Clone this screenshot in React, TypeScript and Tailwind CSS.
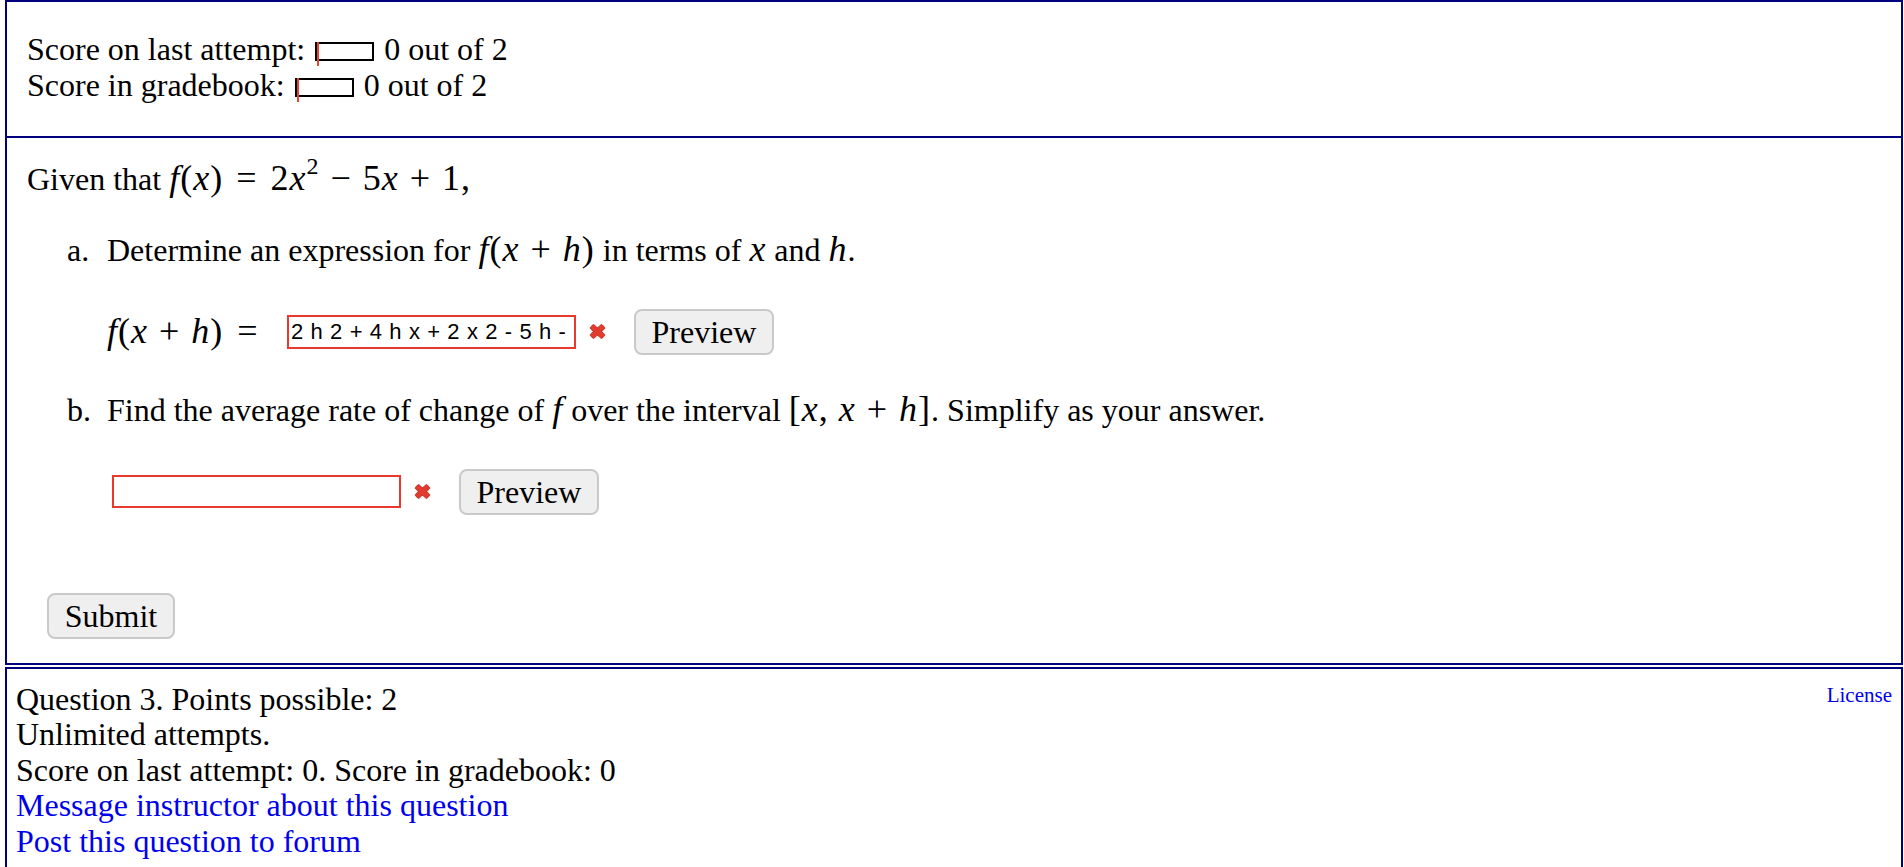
import React from "react";

const serif = { fontFamily: '"Liberation Serif", "Times New Roman", serif' };

function XMark() {
  return (
    <svg width="17" height="15" viewBox="0 0 17 15" className="shrink-0">
      <g transform="translate(8.5 7.5)">
        <rect x="-8" y="-2.7" width="16" height="5.4" rx="1.2" fill="#e33b2e" stroke="#b42a20" strokeWidth="0.8" transform="rotate(42)" />
        <rect x="-8" y="-2.7" width="16" height="5.4" rx="1.2" fill="#e33b2e" stroke="#b42a20" strokeWidth="0.8" transform="rotate(-42)" />
        <rect x="-7.2" y="-2" width="14.4" height="4" rx="1" fill="#e33b2e" transform="rotate(42)" />
      </g>
    </svg>
  );
}

function ScoreBar() {
  return (
    <span className="relative inline-block w-[59px] h-[19px] border-2 border-black align-[-1px] mx-[2px]">
      <span className="absolute left-[0px] top-[-2px] w-[2px] h-[24px] bg-[#e8412f]" />
    </span>
  );
}

function Btn({ label, w }: { label: string; w: string }) {
  return (
    <button
      className={`${w} h-[46px] rounded-[8px] border-2 border-[#c9c9c9] bg-[#efefef] text-[32px] leading-none text-black flex items-center justify-center`}
      style={serif}
    >
      {label}
    </button>
  );
}

const I = ({ children }: { children: React.ReactNode }) => <i className="italic">{children}</i>;
const Op = ({ children, w = "mx-[11px]" }: { children: React.ReactNode; w?: string }) => (
  <span className={w}>{children}</span>
);
const M = ({ children }: { children: React.ReactNode }) => (
  <span className="text-[36px] leading-[10px] tracking-[1px] whitespace-nowrap">{children}</span>
);

export default function App() {
  return (
    <div className="bg-white min-h-[867px] text-black" style={serif}>
      <div className="ml-[5px] mr-[1px] border-2 border-[#000080]">
        <div className="border-b-2 border-[#000080] pl-[20px] pt-[30px] pb-[33px] text-[32px] leading-[35.5px]">
          <div>
            Score on last attempt: <ScoreBar /> 0 out of 2
          </div>
          <div>
            Score in gradebook: <ScoreBar /> 0 out of 2
          </div>
        </div>
        <div className="pl-[20px] pt-[24px] pb-[24px] text-[32px] leading-[35.5px]">
          <div className="h-[35.5px] whitespace-nowrap">
            <span>Given that </span>
            <M>
              <I>f</I>(<I>x</I>)<Op w="mx-[13px]">=</Op>2<I>x</I>
              <span className="relative top-[-16px] text-[24px]">2</span>
              <Op>−</Op>5<I>x</I>
              <Op>+</Op>1,
            </M>
          </div>
          <div className="flex items-baseline mt-[35.5px] h-[35.5px]">
            <span className="ml-[40px] w-[40px]">a.</span>
            <span className="whitespace-nowrap">
              Determine an expression for{" "}
              <M>
                <I>f</I>(<I>x</I><Op>+</Op><I>h</I>)
              </M>{" "}
              in terms of <M><I>x</I></M> and <M><I>h</I></M>.
            </span>
          </div>
          <div className="flex items-center mt-[40px] h-[46px]">
            <span className="ml-[80px] w-[180px] text-[36px] tracking-[1px] whitespace-nowrap">
              <I>f</I>(<I>x</I><Op>+</Op><I>h</I>)<span className="ml-[14px]">=</span>
            </span>
            <div
              className="w-[289px] h-[34px] border-2 border-[#e8392c] pl-[2px] overflow-hidden whitespace-nowrap text-[22px] leading-[30px] tracking-[0.6px]"
              style={{ fontFamily: '"Liberation Sans", Arial, sans-serif' }}
            >
              2 h 2 + 4 h x + 2 x 2 - 5 h -
            </div>
            <span className="ml-[13px]">
              <XMark />
            </span>
            <span className="ml-[28px]">
              <Btn label="Preview" w="w-[140px]" />
            </span>
          </div>
          <div className="flex items-baseline mt-[38.5px] h-[35.5px]">
            <span className="ml-[40px] w-[40px]">b.</span>
            <span className="whitespace-nowrap">
              Find the average rate of change of <M><I>f</I></M> over the interval{" "}
              <M>
                [<I>x</I>,<span className="ml-[10px]" />
                <I>x</I><Op>+</Op><I>h</I>]
              </M>
              . Simplify as your answer.
            </span>
          </div>
          <div className="flex items-center mt-[40px] h-[46px]">
            <div className="ml-[85px] w-[289px] h-[33px] border-2 border-[#e8392c]" />
            <span className="ml-[13px]">
              <XMark />
            </span>
            <span className="ml-[28px]">
              <Btn label="Preview" w="w-[140px]" />
            </span>
          </div>
          <div className="mt-[78px] ml-[20px]">
            <Btn label="Submit" w="w-[128px]" />
          </div>
        </div>
      </div>
      <div className="ml-[5px] mr-[1px] mt-[2px] border-2 border-b-0 border-[#000080] pl-[9px] pr-[9px] pt-[13px] pb-[10px] text-[32px] leading-[35.5px]">
        <a href="#" className="float-right text-[21px] leading-[26px] text-[#0000ee]">License</a>
        <div>Question 3. Points possible: 2</div>
        <div>Unlimited attempts.</div>
        <div>Score on last attempt: 0. Score in gradebook: 0</div>
        <div>
          <a href="#" className="text-[#0000ee]">Message instructor about this question</a>
        </div>
        <div>
          <a href="#" className="text-[#0000ee]">Post this question to forum</a>
        </div>
      </div>
    </div>
  );
}
